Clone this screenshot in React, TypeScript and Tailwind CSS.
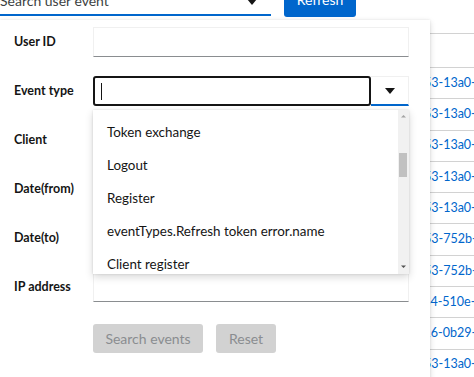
import React from "react";

const labels = ["User ID", "Event type", "Client", "Date(from)", "Date(to)", "IP address"];
const menuItems = ["Token exchange", "Logout", "Register", "eventTypes.Refresh token error.name", "Client register"];
const rowIds = [
  "b53-13a0-4c1d-9a2b",
  "b53-13a0-4c1d-9a2b",
  "b53-13a0-4c1d-9a2b",
  "b53-13a0-4c1d-9a2b",
  "b53-13a0-4c1d-9a2b",
  "b53-752b-4e0a-8f11",
  "b53-752b-4e0a-8f11",
  "a34-510e-4d8c-b2f0",
  "e16-0b29-47d2-aa31",
  "b53-13a0-4c1d-9a2b",
];

function Caret({ className = "" }: { className?: string }) {
  return (
    <svg width="10" height="6" viewBox="0 0 10 6" className={className}>
      <path d="M0 0 L10 0 L5 6 Z" fill="#151515" />
    </svg>
  );
}

function Field() {
  return <div className="h-[30px] border border-[#f0f0f0] border-b-[#8a8d90]" />;
}

function Label({ text }: { text: string }) {
  return <div className="text-[12.5px] font-bold whitespace-nowrap">{text}</div>;
}

export default function App() {
  return (
    <div
      className="relative w-[474px] h-[377px] overflow-hidden bg-white text-[#151515]"
      style={{ fontFamily: "Lato, 'Open Sans', sans-serif" }}
    >
      {/* Toolbar */}
      <div className="flex items-start -mt-[20px] h-[37px]">
        <div className="ml-[-8px] w-[279px] h-[36px] border-b-[2px] border-[#0066cc] flex items-center pl-[8px] pr-[14px] pt-[6px]">
          <span className="flex-1 text-[14px] text-[#3c3f42]">Search user event</span>
          <Caret className="mt-[3px]" />
        </div>
        <button className="ml-[13px] w-[72px] h-[37px] rounded-[3px] bg-[#0066cc] text-white text-[14px] pt-[2px]">
          Refresh
        </button>
      </div>

      {/* Content area */}
      <div className="relative">
        {/* Table behind */}
        <div className="pt-[16px] w-[700px]">
          <div className="h-[35px] border-t border-b border-[#d2d2d2]" />
          {rowIds.map((id, i) => (
            <div
              key={i}
              className="h-[31.3px] border-b border-[#d2d2d2] flex items-center pl-[417px] text-[12.5px] text-[#0066cc] whitespace-nowrap"
            >
              {id}
            </div>
          ))}
        </div>

        {/* Filter panel */}
        <div className="absolute left-0 top-[3px] w-[430px] h-[420px] bg-white shadow-[0_2px_6px_rgba(3,3,3,0.16),0_0_2px_rgba(3,3,3,0.08)] pt-[7px] pl-[14px] pr-[21px]">
          <div className="grid grid-cols-[79px_316px] gap-y-[19px] items-center">
            <Label text={labels[0]} />
            <Field />

            <Label text={labels[1]} />
            <div className="relative flex h-[30px]">
              <div className="w-[278px] h-[30px] rounded-[3px] border-[2px] border-[#151515] flex items-center pl-[6px]">
                <div className="w-[1px] h-[17px] bg-[#151515]" />
              </div>
              <div className="flex-1 h-[30px] border-t border-r border-[#f0f0f0] border-b-[2px] border-b-[#0066cc] flex items-center justify-center">
                <Caret />
              </div>

              {/* Dropdown menu */}
              <div className="absolute left-0 top-[34px] w-[316px] h-[164px] bg-white shadow-[0_3px_8px_rgba(3,3,3,0.16),0_0_2px_rgba(3,3,3,0.12)] overflow-hidden z-10">
                <div className="pt-[6px]">
                  {menuItems.map((m) => (
                    <div key={m} className="h-[33px] flex items-center pl-[14px] text-[13.4px] whitespace-nowrap">
                      {m}
                    </div>
                  ))}
                </div>
                {/* Scrollbar */}
                <div className="absolute right-0 top-0 bottom-0 w-[11px] bg-[#f1f1f1]">
                  <svg width="11" height="11" viewBox="0 0 11 11" className="absolute top-[1px] left-0">
                    <path d="M3 6.5 L8 6.5 L5.5 4 Z" fill="#a3a3a3" />
                  </svg>
                  <div className="absolute left-[1px] top-[43px] w-[8px] h-[24px] bg-[#c1c1c1]" />
                  <svg width="11" height="11" viewBox="0 0 11 11" className="absolute bottom-[2px] left-0">
                    <path d="M3 4.5 L8 4.5 L5.5 7 Z" fill="#505050" />
                  </svg>
                </div>
              </div>
            </div>

            <Label text={labels[2]} />
            <Field />

            <Label text={labels[3]} />
            <Field />

            <Label text={labels[4]} />
            <Field />

            <Label text={labels[5]} />
            <Field />
          </div>

          <div className="flex gap-[13px] mt-[22px] ml-[79px]">
            <button className="w-[110px] h-[29px] rounded-[3px] bg-[#d2d2d2] text-[#8a8d90] text-[14px]">
              Search events
            </button>
            <button className="w-[60px] h-[29px] rounded-[3px] bg-[#d2d2d2] text-[#8a8d90] text-[14px]">
              Reset
            </button>
          </div>
        </div>
      </div>
    </div>
  );
}
